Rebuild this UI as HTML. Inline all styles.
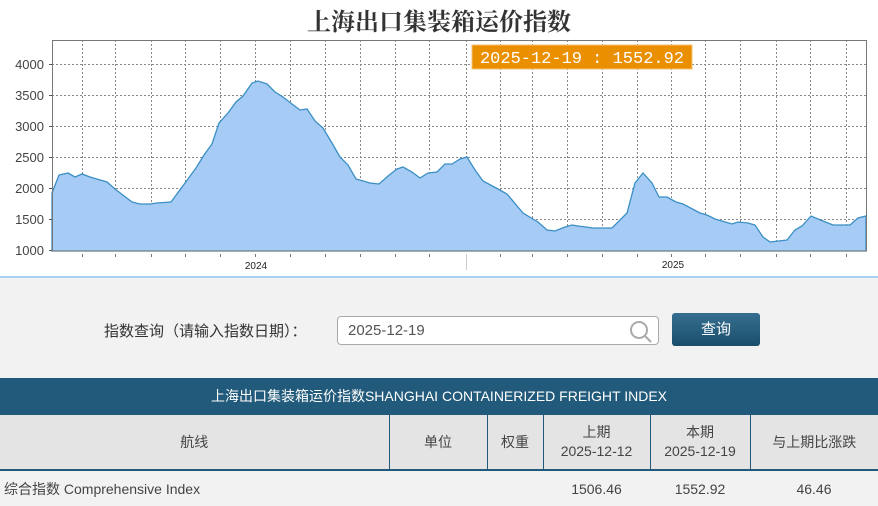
<!DOCTYPE html>
<html><head><meta charset="utf-8"><style>
*{margin:0;padding:0;box-sizing:border-box}
body{width:878px;height:506px;overflow:hidden;background:#f2f2f2;font-family:"Liberation Sans","Noto Sans CJK SC",sans-serif;position:relative}
.top{position:absolute;left:0;top:0;width:878px;height:278px;background:#fff;border-bottom:2px solid #a8d0f0}
.title{position:absolute;top:2px;left:0;width:878px;text-align:center;font-size:24px;font-weight:bold;color:#333;font-family:"Liberation Serif","Noto Serif CJK SC",serif}
.lbl{position:absolute;left:104px;top:320px;font-size:15px;color:#333}
.inp{position:absolute;left:337px;top:316px;width:322px;height:29px;border:1px solid #aaa;border-radius:4px;background:#fff;font-size:15px;color:#555;padding:5px 0 0 10px}
.btn{position:absolute;left:672px;top:313px;width:88px;height:33px;border-radius:3px;background:linear-gradient(#356f90,#1b4e6c);color:#fff;font-size:15px;text-align:center;line-height:33px}
.hb{position:absolute;left:0;top:378px;width:878px;height:37px;background:#215a7a;color:#fff;font-size:14px;text-align:center;line-height:36px}
table{position:absolute;left:0;top:415px;width:878px;border-collapse:collapse;font-size:14px;color:#444}
td{text-align:center}
.hr td{background:#e4e4e4;height:55px;border-right:1px solid #215a7a;border-bottom:2px solid #215a7a;line-height:19px}
.dr td{height:36px}
</style></head><body>
<div class="top">
<div class="title">上海出口集装箱运价指数</div>
<svg width="878" height="278" style="position:absolute;left:0;top:0" font-family="Liberation Sans, sans-serif">
<g stroke="#888" stroke-dasharray="2,2" stroke-width="1">
<line x1="52" x2="866" y1="64.5" y2="64.5"/><line x1="52" x2="866" y1="95.5" y2="95.5"/><line x1="52" x2="866" y1="126.5" y2="126.5"/><line x1="52" x2="866" y1="157.5" y2="157.5"/><line x1="52" x2="866" y1="188.5" y2="188.5"/><line x1="52" x2="866" y1="219.5" y2="219.5"/>
<line x1="82.5" x2="82.5" y1="40" y2="251"/><line x1="115.5" x2="115.5" y1="40" y2="251"/><line x1="151.5" x2="151.5" y1="40" y2="251"/><line x1="185.5" x2="185.5" y1="40" y2="251"/><line x1="220.5" x2="220.5" y1="40" y2="251"/><line x1="255.5" x2="255.5" y1="40" y2="251"/><line x1="290.5" x2="290.5" y1="40" y2="251"/><line x1="325.5" x2="325.5" y1="40" y2="251"/><line x1="360.5" x2="360.5" y1="40" y2="251"/><line x1="395.5" x2="395.5" y1="40" y2="251"/><line x1="429.5" x2="429.5" y1="40" y2="251"/><line x1="466.5" x2="466.5" y1="40" y2="251"/><line x1="500.5" x2="500.5" y1="40" y2="251"/><line x1="532.5" x2="532.5" y1="40" y2="251"/><line x1="567.5" x2="567.5" y1="40" y2="251"/><line x1="602.5" x2="602.5" y1="40" y2="251"/><line x1="637.5" x2="637.5" y1="40" y2="251"/><line x1="671.5" x2="671.5" y1="40" y2="251"/><line x1="705.5" x2="705.5" y1="40" y2="251"/><line x1="740.5" x2="740.5" y1="40" y2="251"/><line x1="776.5" x2="776.5" y1="40" y2="251"/><line x1="810.5" x2="810.5" y1="40" y2="251"/><line x1="846.5" x2="846.5" y1="40" y2="251"/>
</g>
<polygon fill="#a6cbf5" stroke="#3a8fc4" stroke-width="1.3" points="52,251 52,193 59,175 68,173 75,177 82,174 90,177 107,182 115,189 132,202 140,204 150,204 157,203 171,202 185,183 196,168 204,155 212,144 219,123 228,113 236,102 243,96 252,83 258,81 267,84 275,92 283,97 292,104 300,110 307,109 315,121 323,128 332,143 340,157 348,165 356,179 370,183 379,184 388,176 397,169 403,167 412,172 420,178 428,173 437,172 445,164 452,164 460,159 467,157 475,170 483,181 498,189 507,194 523,213 538,222 547,230 555,231 565,227 572,225 578,226 593,228 612,228 627,213 635,183 643,173 652,183 659,197 667,197 676,202 683,204 700,213 707,215 715,219 732,224 738,222 748,223 755,225 763,237 770,242 787,240 795,230 802,226 811,216 818,219 833,225 850,225 858,218 866,216 866,251"/>
<rect x="52.5" y="40.5" width="814" height="210.5" fill="none" stroke="#777"/>
<g stroke="#555"><line x1="49" x2="52" y1="64.5" y2="64.5"/><line x1="49" x2="52" y1="95.5" y2="95.5"/><line x1="49" x2="52" y1="126.5" y2="126.5"/><line x1="49" x2="52" y1="157.5" y2="157.5"/><line x1="49" x2="52" y1="188.5" y2="188.5"/><line x1="49" x2="52" y1="219.5" y2="219.5"/><line x1="49" x2="52" y1="250.5" y2="250.5"/></g>
<g font-size="13" fill="#444" text-anchor="end"><text x="44" y="69">4000</text><text x="44" y="100">3500</text><text x="44" y="131">3000</text><text x="44" y="162">2500</text><text x="44" y="193">2000</text><text x="44" y="224">1500</text><text x="44" y="255">1000</text></g>
<g stroke="#777"><line x1="82.5" x2="82.5" y1="254" y2="257"/><line x1="115.5" x2="115.5" y1="254" y2="257"/><line x1="151.5" x2="151.5" y1="254" y2="257"/><line x1="185.5" x2="185.5" y1="254" y2="257"/><line x1="220.5" x2="220.5" y1="254" y2="257"/><line x1="255.5" x2="255.5" y1="254" y2="257"/><line x1="290.5" x2="290.5" y1="254" y2="257"/><line x1="325.5" x2="325.5" y1="254" y2="257"/><line x1="360.5" x2="360.5" y1="254" y2="257"/><line x1="395.5" x2="395.5" y1="254" y2="257"/><line x1="429.5" x2="429.5" y1="254" y2="257"/><line x1="466.5" x2="466.5" y1="254" y2="270" stroke="#ccc"/><line x1="500.5" x2="500.5" y1="254" y2="257"/><line x1="532.5" x2="532.5" y1="254" y2="257"/><line x1="567.5" x2="567.5" y1="254" y2="257"/><line x1="602.5" x2="602.5" y1="254" y2="257"/><line x1="637.5" x2="637.5" y1="254" y2="257"/><line x1="671.5" x2="671.5" y1="254" y2="257"/><line x1="705.5" x2="705.5" y1="254" y2="257"/><line x1="740.5" x2="740.5" y1="254" y2="257"/><line x1="776.5" x2="776.5" y1="254" y2="257"/><line x1="810.5" x2="810.5" y1="254" y2="257"/><line x1="846.5" x2="846.5" y1="254" y2="257"/></g>
<g font-size="10" fill="#222" text-anchor="middle"><text x="256" y="269">2024</text><text x="673" y="268">2025</text></g>
<rect x="472" y="45" width="220" height="24" fill="#ea9000" stroke="#f5c070"/>
<text x="582" y="63" fill="#fff" font-size="17" text-anchor="middle" font-family="Liberation Mono, monospace">2025-12-19 : 1552.92</text>
</svg>
</div>
<div class="lbl">指数查询（请输入指数日期）：</div>
<div class="inp">2025-12-19
<svg width="26" height="26" style="position:absolute;right:4px;top:2px"><circle cx="11" cy="11" r="8" fill="none" stroke="#aaa" stroke-width="2"/><line x1="17" y1="17" x2="23" y2="23" stroke="#aaa" stroke-width="2"/></svg></div>
<div class="btn">查询</div>
<div class="hb">上海出口集装箱运价指数SHANGHAI CONTAINERIZED FREIGHT INDEX</div>
<table>
<tr class="hr"><td style="width:389px">航线</td><td style="width:98px">单位</td><td style="width:56px">权重</td><td style="width:107px">上期<br>2025-12-12</td><td style="width:100px">本期<br>2025-12-19</td><td style="border-right:none">与上期比涨跌</td></tr>
<tr class="dr"><td style="text-align:left;padding-left:4px">综合指数 Comprehensive Index</td><td></td><td></td><td>1506.46</td><td>1552.92</td><td>46.46</td></tr>
</table>
</body></html>
